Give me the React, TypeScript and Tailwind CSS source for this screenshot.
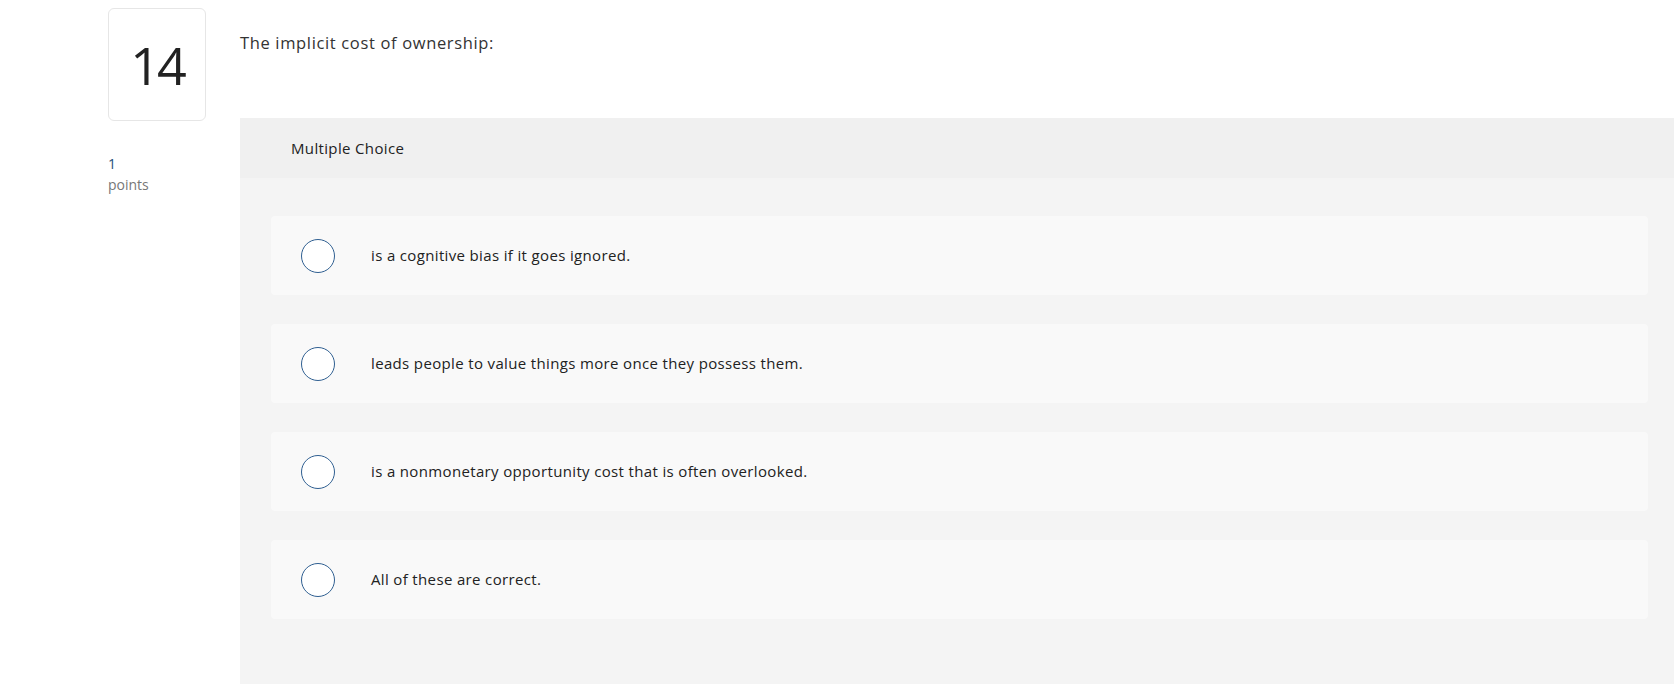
import React from "react";

const OPTIONS = [
  "is a cognitive bias if it goes ignored.",
  "leads people to value things more once they possess them.",
  "is a nonmonetary opportunity cost that is often overlooked.",
  "All of these are correct.",
];

const App = () => {
  return (
    <div className="flex min-h-[689px] w-full bg-white font-['Open_Sans',sans-serif] text-[#333]">
      {/* Left column: question number + points */}
      <div className="ml-[108px] mt-[8px] flex w-[98px] shrink-0 flex-col">
        <div className="flex h-[113px] w-[98px] items-center justify-center rounded-[6px] border border-[#e6e6e6]">
          <span className="text-[52px] font-normal leading-none tracking-[-3px] text-[#222]">
            14
          </span>
        </div>
        <div className="mt-[32px] text-[14px] leading-[22px] text-[#1d4f7a]">1</div>
        <div className="text-[14px] leading-[20px] text-[#777]">points</div>
      </div>

      {/* Right column */}
      <div className="ml-[34px] flex min-w-0 flex-1 flex-col">
        <p className="mt-[33px] text-[16.5px] leading-[20px] tracking-[0.65px] text-[#333]">
          The implicit cost of ownership:
        </p>

        <div className="mt-[65px] flex flex-col bg-[#f4f4f4] pb-[65px]">
          <div className="flex h-[60px] items-center bg-[#f0f0f0] pl-[51px] text-[15px] tracking-[0.35px] text-[#222]">
            Multiple Choice
          </div>

          <div className="flex flex-col gap-[29px] pl-[31px] pr-[26px] pt-[38px]">
            {OPTIONS.map((opt, idx) => (
              <div
                key={idx}
                className="flex h-[79px] items-center rounded-[4px] bg-[#f9f9f9] pl-[30px]"
              >
                <span className="h-[34px] w-[34px] shrink-0 rounded-full border-[1.5px] border-[#2f5f91] bg-white" />
                <span className="ml-[36px] text-[15px] tracking-[0.35px] text-[#222]">{opt}</span>
              </div>
            ))}
          </div>
        </div>
      </div>
    </div>
  );
};

export default App;
